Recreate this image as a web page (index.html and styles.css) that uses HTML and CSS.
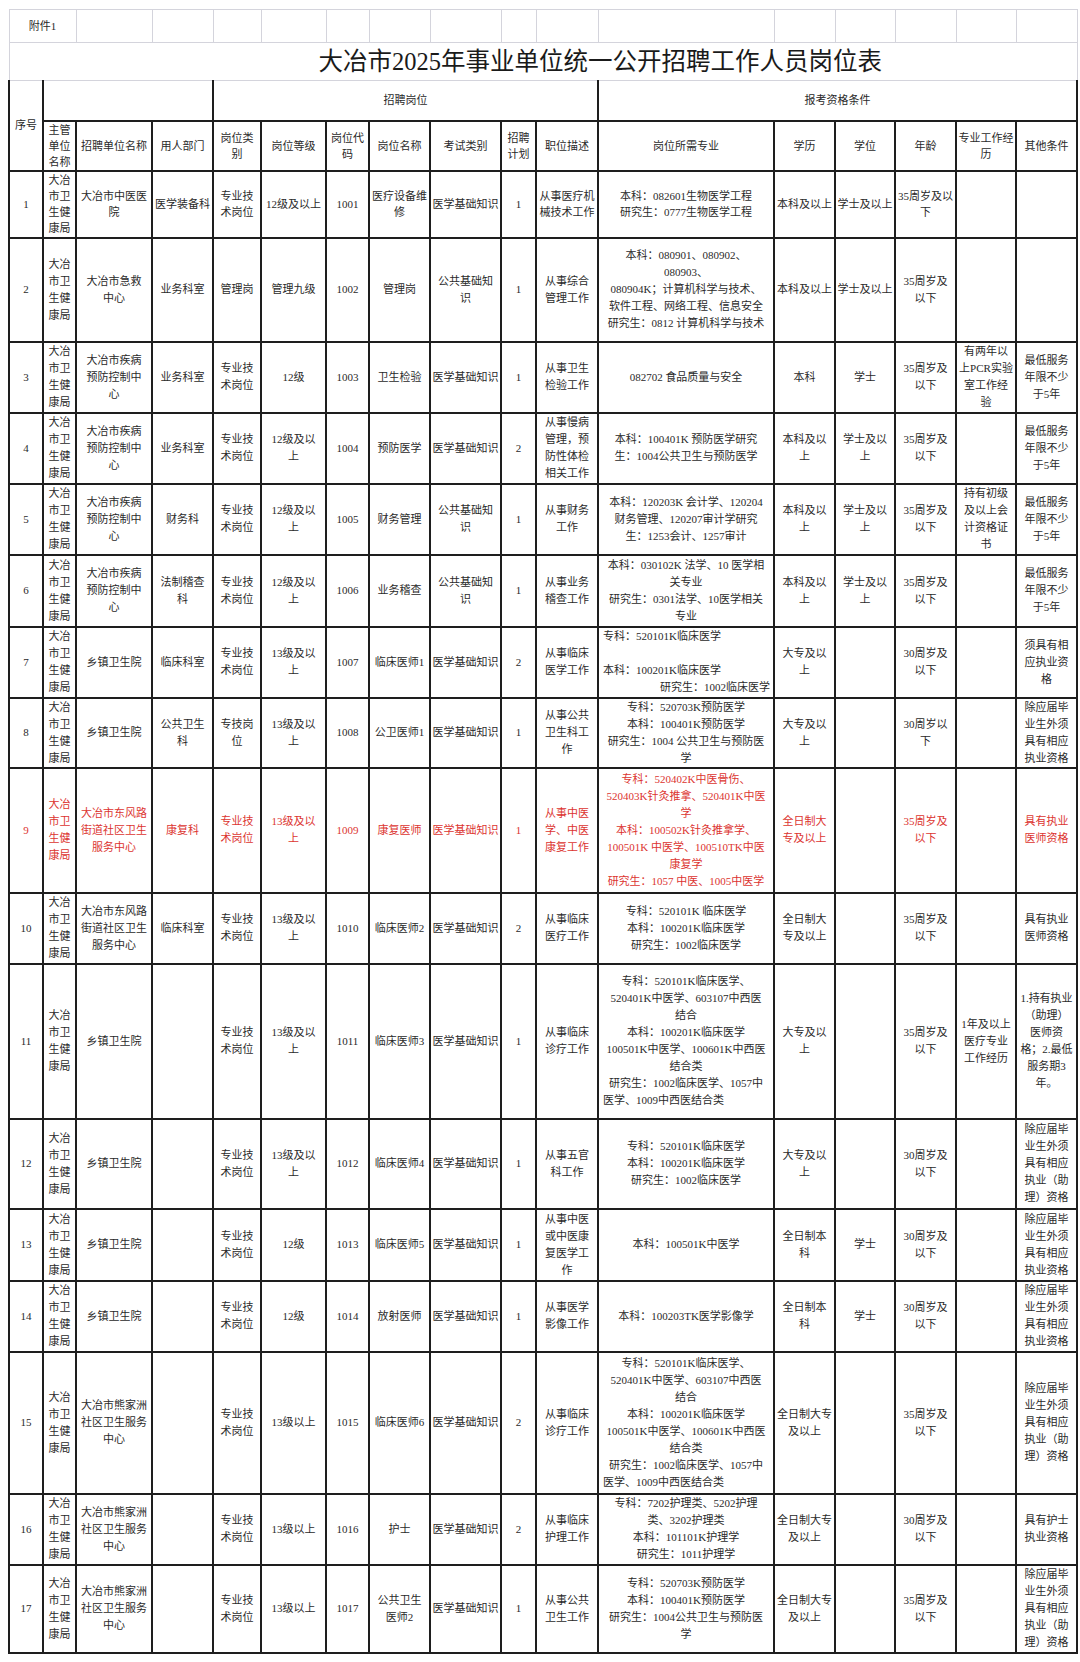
FILE: index.html
```html
<!DOCTYPE html>
<html lang="zh-CN">
<head>
<meta charset="utf-8">
<title>大冶市2025年事业单位统一公开招聘工作人员岗位表</title>
<link rel="stylesheet" href="styles.css">
</head>
<body>
<table class="sheet">
<colgroup>
<col class="w34"><col class="w33"><col class="w76"><col class="w61"><col class="w48"><col class="w65"><col class="w43"><col class="w61"><col class="w71"><col class="w35"><col class="w62"><col class="w176"><col class="w61"><col class="w60"><col class="w61"><col class="w60"><col class="w61">
</colgroup>
<tr class="grid h33"><td colspan="2">附件1</td><td></td><td></td><td></td><td></td><td></td><td></td><td></td><td></td><td></td><td></td><td></td><td></td><td></td><td></td><td></td></tr>
<tr class="grid h38"><td colspan="17" class="title">大冶市2025年事业单位统一公开招聘工作人员岗位表</td></tr>
<tr class="hd1 h40"><td rowspan="2">序号</td><td colspan="3"></td><td colspan="7">招聘岗位</td><td colspan="6">报考资格条件</td></tr>
<tr class="h50 tight"><td>主管<br>单位<br>名称</td><td>招聘单位名称</td><td>用人部门</td><td>岗位类<br>别</td><td>岗位等级</td><td>岗位代<br>码</td><td>岗位名称</td><td>考试类别</td><td>招聘<br>计划</td><td>职位描述</td><td>岗位所需专业</td><td>学历</td><td>学位</td><td>年龄</td><td>专业工作经<br>历</td><td>其他条件</td></tr>

<tr class="h67 tight"><td>1</td><td>大冶<br>市卫<br>生健<br>康局</td><td>大冶市中医医<br>院</td><td>医学装备科</td><td>专业技<br>术岗位</td><td>12级及以上</td><td>1001</td><td>医疗设备维<br>修</td><td>医学基础知识</td><td>1</td><td>从事医疗机<br>械技术工作</td><td>本科：082601生物医学工程<br>研究生：0777生物医学工程</td><td>本科及以上</td><td>学士及以上</td><td>35周岁及以<br>下</td><td></td><td></td></tr>

<tr class="h104"><td>2</td><td>大冶<br>市卫<br>生健<br>康局</td><td>大冶市急救<br>中心</td><td>业务科室</td><td>管理岗</td><td>管理九级</td><td>1002</td><td>管理岗</td><td>公共基础知<br>识</td><td>1</td><td>从事综合<br>管理工作</td><td>本科：080901、080902、<br>080903、<br>080904K；计算机科学与技术、<br>软件工程、网络工程、信息安全<br>研究生：0812 计算机科学与技术</td><td>本科及以上</td><td>学士及以上</td><td>35周岁及<br>以下</td><td></td><td></td></tr>

<tr class="h71"><td>3</td><td>大冶<br>市卫<br>生健<br>康局</td><td>大冶市疾病<br>预防控制中<br>心</td><td>业务科室</td><td>专业技<br>术岗位</td><td>12级</td><td>1003</td><td>卫生检验</td><td>医学基础知识</td><td>1</td><td>从事卫生<br>检验工作</td><td>082702 食品质量与安全</td><td>本科</td><td>学士</td><td>35周岁及<br>以下</td><td>有两年以<br>上PCR实验<br>室工作经<br>验</td><td>最低服务<br>年限不少<br>于5年</td></tr>

<tr class="h71"><td>4</td><td>大冶<br>市卫<br>生健<br>康局</td><td>大冶市疾病<br>预防控制中<br>心</td><td>业务科室</td><td>专业技<br>术岗位</td><td>12级及以<br>上</td><td>1004</td><td>预防医学</td><td>医学基础知识</td><td>2</td><td>从事慢病<br>管理，预<br>防性体检<br>相关工作</td><td>本科：100401K 预防医学研究<br>生：1004公共卫生与预防医学</td><td>本科及以<br>上</td><td>学士及以<br>上</td><td>35周岁及<br>以下</td><td></td><td>最低服务<br>年限不少<br>于5年</td></tr>

<tr class="h71"><td>5</td><td>大冶<br>市卫<br>生健<br>康局</td><td>大冶市疾病<br>预防控制中<br>心</td><td>财务科</td><td>专业技<br>术岗位</td><td>12级及以<br>上</td><td>1005</td><td>财务管理</td><td>公共基础知<br>识</td><td>1</td><td>从事财务<br>工作</td><td>本科：120203K 会计学、120204<br>财务管理、120207审计学研究<br>生：1253会计、1257审计</td><td>本科及以<br>上</td><td>学士及以<br>上</td><td>35周岁及<br>以下</td><td>持有初级<br>及以上会<br>计资格证<br>书</td><td>最低服务<br>年限不少<br>于5年</td></tr>

<tr class="h72"><td>6</td><td>大冶<br>市卫<br>生健<br>康局</td><td>大冶市疾病<br>预防控制中<br>心</td><td>法制稽查<br>科</td><td>专业技<br>术岗位</td><td>12级及以<br>上</td><td>1006</td><td>业务稽查</td><td>公共基础知<br>识</td><td>1</td><td>从事业务<br>稽查工作</td><td>本科：030102K 法学、10 医学相<br>关专业<br>研究生：0301法学、10医学相关<br>专业</td><td>本科及以<br>上</td><td>学士及以<br>上</td><td>35周岁及<br>以下</td><td></td><td>最低服务<br>年限不少<br>于5年</td></tr>

<tr class="h71"><td>7</td><td>大冶<br>市卫<br>生健<br>康局</td><td>乡镇卫生院</td><td>临床科室</td><td>专业技<br>术岗位</td><td>13级及以<br>上</td><td>1007</td><td>临床医师1</td><td>医学基础知识</td><td>2</td><td>从事临床<br>医学工作</td><td><span class="l">专科：520101K临床医学</span><span class="l">&nbsp;</span><span class="l">本科：100201K临床医学</span><span class="r">研究生：1002临床医学</span></td><td>大专及以<br>上</td><td></td><td>30周岁及<br>以下</td><td></td><td>须具有相<br>应执业资<br>格</td></tr>

<tr class="h70"><td>8</td><td>大冶<br>市卫<br>生健<br>康局</td><td>乡镇卫生院</td><td>公共卫生<br>科</td><td>专技岗<br>位</td><td>13级及以<br>上</td><td>1008</td><td>公卫医师1</td><td>医学基础知识</td><td>1</td><td>从事公共<br>卫生科工<br>作</td><td>专科：520703K预防医学<br>本科：100401K预防医学<br>研究生：1004 公共卫生与预防医<br>学</td><td>大专及以<br>上</td><td></td><td>30周岁以<br>下</td><td></td><td>除应届毕<br>业生外须<br>具有相应<br>执业资格</td></tr>

<tr class="h125 red"><td>9</td><td>大冶<br>市卫<br>生健<br>康局</td><td>大冶市东风路<br>街道社区卫生<br>服务中心</td><td>康复科</td><td>专业技<br>术岗位</td><td>13级及以<br>上</td><td>1009</td><td>康复医师</td><td>医学基础知识</td><td>1</td><td>从事中医<br>学、中医<br>康复工作</td><td>专科：520402K中医骨伤、<br>520403K针灸推拿、520401K中医<br>学<br>本科：100502K针灸推拿学、<br>100501K 中医学、100510TK中医<br>康复学<br>研究生：1057 中医、1005中医学</td><td>全日制大<br>专及以上</td><td></td><td>35周岁及<br>以下</td><td></td><td>具有执业<br>医师资格</td></tr>

<tr class="h71"><td>10</td><td>大冶<br>市卫<br>生健<br>康局</td><td>大冶市东风路<br>街道社区卫生<br>服务中心</td><td>临床科室</td><td>专业技<br>术岗位</td><td>13级及以<br>上</td><td>1010</td><td>临床医师2</td><td>医学基础知识</td><td>2</td><td>从事临床<br>医疗工作</td><td>专科：520101K 临床医学<br>本科：100201K临床医学<br>研究生：1002临床医学</td><td>全日制大<br>专及以上</td><td></td><td>35周岁及<br>以下</td><td></td><td>具有执业<br>医师资格</td></tr>

<tr class="h155"><td>11</td><td>大冶<br>市卫<br>生健<br>康局</td><td>乡镇卫生院</td><td></td><td>专业技<br>术岗位</td><td>13级及以<br>上</td><td>1011</td><td>临床医师3</td><td>医学基础知识</td><td>1</td><td>从事临床<br>诊疗工作</td><td>专科：520101K临床医学、<br>520401K中医学、603107中西医<br>结合<br>本科：100201K临床医学<br>100501K中医学、100601K中西医<br>结合类<br>研究生：1002临床医学、1057中<span class="l">医学、1009中西医结合类</span></td><td>大专及以<br>上</td><td></td><td>35周岁及<br>以下</td><td>1年及以上<br>医疗专业<br>工作经历</td><td>1.持有执业<br>（助理）<br>医师资<br>格；2.最低<br>服务期3<br>年。</td></tr>

<tr class="h90"><td>12</td><td>大冶<br>市卫<br>生健<br>康局</td><td>乡镇卫生院</td><td></td><td>专业技<br>术岗位</td><td>13级及以<br>上</td><td>1012</td><td>临床医师4</td><td>医学基础知识</td><td>1</td><td>从事五官<br>科工作</td><td>专科：520101K临床医学<br>本科：100201K临床医学<br>研究生：1002临床医学</td><td>大专及以<br>上</td><td></td><td>30周岁及<br>以下</td><td></td><td>除应届毕<br>业生外须<br>具有相应<br>执业（助<br>理）资格</td></tr>

<tr class="h72"><td>13</td><td>大冶<br>市卫<br>生健<br>康局</td><td>乡镇卫生院</td><td></td><td>专业技<br>术岗位</td><td>12级</td><td>1013</td><td>临床医师5</td><td>医学基础知识</td><td>1</td><td>从事中医<br>或中医康<br>复医学工<br>作</td><td>本科：100501K中医学</td><td>全日制本<br>科</td><td>学士</td><td>30周岁及<br>以下</td><td></td><td>除应届毕<br>业生外须<br>具有相应<br>执业资格</td></tr>

<tr class="h71"><td>14</td><td>大冶<br>市卫<br>生健<br>康局</td><td>乡镇卫生院</td><td></td><td>专业技<br>术岗位</td><td>12级</td><td>1014</td><td>放射医师</td><td>医学基础知识</td><td>1</td><td>从事医学<br>影像工作</td><td>本科：100203TK医学影像学</td><td>全日制本<br>科</td><td>学士</td><td>30周岁及<br>以下</td><td></td><td>除应届毕<br>业生外须<br>具有相应<br>执业资格</td></tr>

<tr class="h142"><td>15</td><td>大冶<br>市卫<br>生健<br>康局</td><td>大冶市熊家洲<br>社区卫生服务<br>中心</td><td></td><td>专业技<br>术岗位</td><td>13级以上</td><td>1015</td><td>临床医师6</td><td>医学基础知识</td><td>2</td><td>从事临床<br>诊疗工作</td><td>专科：520101K临床医学、<br>520401K中医学、603107中西医<br>结合<br>本科：100201K临床医学<br>100501K中医学、100601K中西医<br>结合类<br>研究生：1002临床医学、1057中<span class="l">医学、1009中西医结合类</span></td><td>全日制大专<br>及以上</td><td></td><td>35周岁及<br>以下</td><td></td><td>除应届毕<br>业生外须<br>具有相应<br>执业（助<br>理）资格</td></tr>

<tr class="h71"><td>16</td><td>大冶<br>市卫<br>生健<br>康局</td><td>大冶市熊家洲<br>社区卫生服务<br>中心</td><td></td><td>专业技<br>术岗位</td><td>13级以上</td><td>1016</td><td>护士</td><td>医学基础知识</td><td>2</td><td>从事临床<br>护理工作</td><td>专科：7202护理类、5202护理<br>类、3202护理类<br>本科：101101K护理学<br>研究生：1011护理学</td><td>全日制大专<br>及以上</td><td></td><td>30周岁及<br>以下</td><td></td><td>具有护士<br>执业资格</td></tr>

<tr class="h88"><td>17</td><td>大冶<br>市卫<br>生健<br>康局</td><td>大冶市熊家洲<br>社区卫生服务<br>中心</td><td></td><td>专业技<br>术岗位</td><td>13级以上</td><td>1017</td><td>公共卫生<br>医师2</td><td>医学基础知识</td><td>1</td><td>从事公共<br>卫生工作</td><td>专科：520703K预防医学<br>本科：100401K预防医学<br>研究生：1004公共卫生与预防医<br>学</td><td>全日制大专<br>及以上</td><td></td><td>35周岁及<br>以下</td><td></td><td>除应届毕<br>业生外须<br>具有相应<br>执业（助<br>理）资格</td></tr>
</table>
</body>
</html>
```

FILE: styles.css
```css
* { box-sizing: border-box; }
html, body { background: #ffffff; }
body {
  margin: 0;
  padding: 9px 0 0 8px;
  font-family: "Liberation Serif", "Noto Sans CJK SC", serif;
  color: #2a2a2a;
}
.sheet {
  border-collapse: collapse;
  table-layout: fixed;
  width: 1068px;
  font-size: 11px;
  line-height: 17px;
}
.sheet td {
  border: 2px solid #1e1e1e;
  padding: 0;
  text-align: center;
  vertical-align: middle;
  white-space: nowrap;
  overflow: hidden;
}
.sheet .tight td { line-height: 16px; }
.sheet .grid td { border: 1px solid #d4d4dc; }
.sheet .hd1 td { border-top: 1px solid #d4d4dc; }
.sheet .title {
  text-align: left;
  padding-left: 309px;
  font-size: 24.5px;
  line-height: 30px;
  color: #1a1a1a;
}
.sheet .red td { color: #dc3430; }
.l { display: block; text-align: left; padding-left: 4px; }
.r { display: block; text-align: right; padding-right: 3px; }

.w33 { width: 33px; }
.w34 { width: 34px; }
.w35 { width: 35px; }
.w43 { width: 43px; }
.w48 { width: 48px; }
.w60 { width: 60px; }
.w61 { width: 61px; }
.w62 { width: 62px; }
.w65 { width: 65px; }
.w71 { width: 71px; }
.w76 { width: 76px; }
.w176 { width: 176px; }

.h33 { height: 33px; }
.h38 { height: 38px; }
.h40 { height: 40px; }
.h50 { height: 50px; }
.h67 { height: 67px; }
.h70 { height: 70px; }
.h71 { height: 71px; }
.h72 { height: 72px; }
.h88 { height: 88px; }
.h90 { height: 90px; }
.h104 { height: 104px; }
.h125 { height: 125px; }
.h142 { height: 142px; }
.h155 { height: 155px; }
```
